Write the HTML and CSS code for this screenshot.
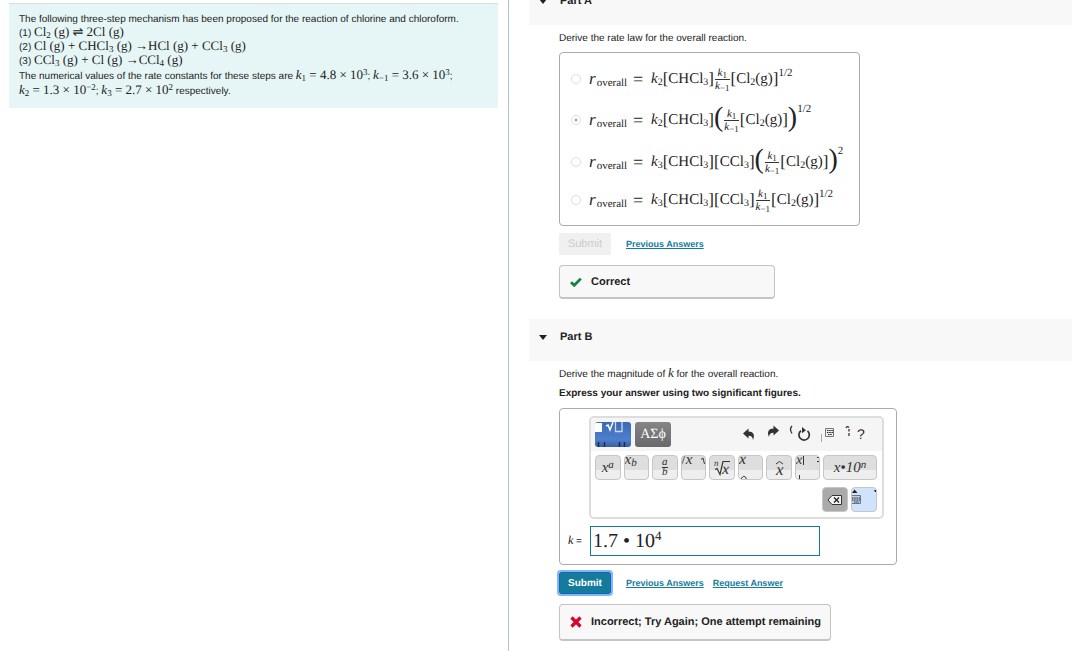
FILE: index.html
```html
<!DOCTYPE html>
<html lang="en">
<head>
<meta charset="utf-8">
<title>Rate law problem</title>
<link rel="stylesheet" href="styles.css">
</head>
<body>
<div class="page">
  <aside class="intro-pane">
    <div class="intro">
      <p>The following three-step mechanism has been proposed for the reaction of chlorine and chloroform.</p>
      <p>(1) <span class="m">Cl<sub>2</sub> (g) ⇌ 2Cl (g)</span></p>
      <p>(2) <span class="m">Cl (g) + CHCl<sub>3</sub> (g) →HCl (g) + CCl<sub>3</sub> (g)</span></p>
      <p>(3) <span class="m">CCl<sub>3</sub> (g) + Cl (g) →CCl<sub>4</sub> (g)</span></p>
      <p class="tall">The numerical values of the rate constants for these steps are <span class="m"><i>k</i><sub>1</sub> = 4.8 × 10<sup>3</sup></span>; <span class="m"><i>k</i><sub>−1</sub> = 3.6 × 10<sup>3</sup></span>;</p>
      <p class="tall"><span class="m"><i>k</i><sub>2</sub> = 1.3 × 10<sup>−2</sup></span>; <span class="m"><i>k</i><sub>3</sub> = 2.7 × 10<sup>2</sup></span> respectively.</p>
    </div>
  </aside>

  <main class="parts">
    <section class="part part-a">
      <h2 class="part-head"><span class="caret"></span>Part A</h2>
      <div class="part-body">
        <p class="prompt">Derive the rate law for the overall reaction.</p>
        <div class="box choices">
          <label class="choice"><input type="radio" name="law" disabled>
            <span class="eq"><span class="lhs"><i>r</i><sub>overall</sub></span><span class="is">=</span><i>k</i><sub>2</sub><b class="br">[</b>CHCl<sub>3</sub><b class="br">]</b><span class="frac"><span><i>k</i><sub>1</sub></span><span><i>k</i><sub>−1</sub></span></span><b class="br">[</b>Cl<sub>2</sub>(g)<b class="br">]</b><sup>1/2</sup></span></label>
          <label class="choice"><input type="radio" name="law" disabled checked>
            <span class="eq"><span class="lhs"><i>r</i><sub>overall</sub></span><span class="is">=</span><i>k</i><sub>2</sub><b class="br">[</b>CHCl<sub>3</sub><b class="br">]</b><span class="big">(</span><span class="frac"><span><i>k</i><sub>1</sub></span><span><i>k</i><sub>−1</sub></span></span><b class="br">[</b>Cl<sub>2</sub>(g)<b class="br">]</b><span class="big">)</span><sup class="high">1/2</sup></span></label>
          <label class="choice"><input type="radio" name="law" disabled>
            <span class="eq"><span class="lhs"><i>r</i><sub>overall</sub></span><span class="is">=</span><i>k</i><sub>3</sub><b class="br">[</b>CHCl<sub>3</sub><b class="br">]</b><b class="br">[</b>CCl<sub>3</sub><b class="br">]</b><span class="big">(</span><span class="frac"><span><i>k</i><sub>1</sub></span><span><i>k</i><sub>−1</sub></span></span><b class="br">[</b>Cl<sub>2</sub>(g)<b class="br">]</b><span class="big">)</span><sup class="high">2</sup></span></label>
          <label class="choice"><input type="radio" name="law" disabled>
            <span class="eq"><span class="lhs"><i>r</i><sub>overall</sub></span><span class="is">=</span><i>k</i><sub>3</sub><b class="br">[</b>CHCl<sub>3</sub><b class="br">]</b><b class="br">[</b>CCl<sub>3</sub><b class="br">]</b><span class="frac"><span><i>k</i><sub>1</sub></span><span><i>k</i><sub>−1</sub></span></span><b class="br">[</b>Cl<sub>2</sub>(g)<b class="br">]</b><sup>1/2</sup></span></label>
        </div>
        <div class="actions">
          <button class="submit" type="button" disabled>Submit</button>
          <a href="#">Previous Answers</a>
        </div>
        <div class="feedback right">
          <svg width="12" height="10" viewBox="0 0 12 10"><path d="M1 5.2 4.3 8.3 10.8 1.6" fill="none" stroke="#138440" stroke-width="2.8"/></svg>
          Correct
        </div>
      </div>
    </section>

    <section class="part">
      <h2 class="part-head"><span class="caret"></span>Part B</h2>
      <div class="part-body">
        <p class="prompt">Derive the magnitude of <span class="m"><i>k</i></span> for the overall reaction.</p>
        <p class="prompt strong">Express your answer using two significant figures.</p>
        <div class="box entry">
          <div class="tools">
            <div class="tools-top">
              <button class="tab blue" type="button" aria-label="Templates">
                <svg width="36" height="25" viewBox="0 0 36 25"><path d="M0 1h7v9H0z" fill="#fff"/><path d="M11 4l2-1 2 5L18 0" fill="none" stroke="#fff" stroke-width="1.500"/><path d="M20.500 0v9.500h6.500V0" fill="none" stroke="#c9daf4" stroke-width="1.300"/><path d="M3.500 20v5M9.500 20v5M24.500 20v5M29.500 20v5" stroke="#152c57" stroke-width="1.500"/></svg></button>
              <button class="tab gray" type="button">ΑΣϕ</button>
              <span class="spacer"></span>
              <button class="icon" type="button" aria-label="Undo"><svg width="14" height="16" viewBox="0 0 14 16"><path d="M1 7.500 6.500 2.500V5.500c4.500 0 7 3 4.500 8.500-.2-2.800-1.500-4.300-4.500-4.300V12.500z" fill="#333"/></svg></button>
              <button class="icon up" type="button" aria-label="Redo"><svg width="14" height="16" viewBox="0 0 14 16"><path d="M13 7.500 7.500 2.500V5.500C3 5.500.5 8.500 3 14c.2-2.800 1.500-4.300 4.500-4.300V12.500z" fill="#333"/></svg></button>
              <button class="icon wide" type="button" aria-label="Reset"><svg width="28" height="20" viewBox="0 0 28 20"><path d="M6 2Q3 5 6 9.500" fill="none" stroke="#333" stroke-width="1.300"/><path d="M15 6.700a5.200 5.200 0 1 0 6.500 .2" fill="none" stroke="#333" stroke-width="1.700"/><path d="M16 3 20 6.200l-4 3z" fill="#333"/></svg></button>
              <button class="icon" type="button" aria-label="Keyboard"><svg width="15" height="18" viewBox="0 0 15 18"><path d="M1.500 9v8" stroke="#aaa"/><path d="M5.500 3.500h8v8h-8z" fill="#eee" stroke="#777"/><path d="M7 5.500h6M7 7.500h6M8 9.500h4" stroke="#222" stroke-dasharray="1.500 .7"/></svg></button>
              <button class="icon help" type="button" aria-label="Help"><svg width="6" height="12" viewBox="0 0 6 12"><path d="M1 3Q2 .5 4 2.500M4 4v2.500M4 8v3" fill="none" stroke="#333" stroke-width="1.300"/></svg><span>?</span></button>
            </div>
            <div class="keys">
              <button type="button"><span><i>x</i><sup>a</sup></span></button>
              <button class="top" type="button"><span><i>x</i><sub>b</sub></span></button>
              <button type="button"><span class="frac"><span><i>a</i></span><span><i>b</i></span></span></button>
              <button class="top split" type="button"><span>/<i>x</i></span><svg width="4" height="9" viewBox="0 0 4 9"><path d="M0 3.500 2 2l1.500 6" fill="none" stroke="#333"/></svg></button>
              <button type="button" aria-label="nth root"><svg width="20" height="18" viewBox="0 0 20 18"><path d="M3 10.500 5 9.500l3 6L11 2.500H18" fill="none" stroke="#333" stroke-width="1.200"/><text x="2" y="7" font-size="9">n</text><text x="10" y="15" font-size="16">x</text></svg></button>
              <button class="top" type="button" aria-label="Stacked"><svg width="24" height="23" viewBox="0 0 24 23"><text x="0" y="8" font-size="16">x</text><path d="M2 23q3-5 5-1v2" fill="none" stroke="#333"/></svg></button>
              <button type="button" aria-label="x hat"><svg width="16" height="20" viewBox="0 0 16 20"><path d="M5 6 8.500 3.500 12 6" fill="none" stroke="#333"/><text x="5" y="17" font-size="17">x</text></svg></button>
              <button class="top" type="button" aria-label="Evaluate"><svg width="24" height="23" viewBox="0 0 24 23"><text x="0" y="8" font-size="14">x</text><path d="M7.500 0v9M3.500 19v4M21 1.500h2M21 5.500h2" fill="none" stroke="#333"/></svg></button>
              <button type="button"><span><i>x</i>•<i>10</i><sup>n</sup></span></button>
            </div>
            <div class="keys-end">
              <button class="erase" type="button" aria-label="Backspace"><svg width="16" height="12" viewBox="0 0 16 12"><path d="M1 6 5 1.500h9.500v9H5z" fill="#f3f3f3" stroke="#333"/><path d="m7 3.500 5 5m0-5-5 5" stroke="#222" stroke-width="1.300"/></svg></button>
              <button class="pad" type="button" aria-label="Show keyboard"><svg width="24" height="23" viewBox="0 0 24 23"><path d="M0 5 2.500 1.500 5.500 5zM22 2h2v2h-1z" fill="#222"/><path d="M0 7.500h8.500v8H0" fill="#c2d3e6" stroke="#66788c"/><path d="M0 10h8M0 12h8M2 14h5" stroke="#222" stroke-dasharray="1.500 .7"/></svg></button>
            </div>
          </div>
          <div class="answer">
            <span class="answer-name" id="k-name"><i>k</i> =</span>
            <div class="field" role="textbox" contenteditable="true" aria-labelledby="k-name">1.7 • 10<sup>4</sup></div>
          </div>
        </div>
        <div class="actions">
          <button class="submit active" type="button">Submit</button>
          <a href="#">Previous Answers</a>
          <a href="#">Request Answer</a>
        </div>
        <div class="feedback wrong">
          <svg width="12" height="12" viewBox="0 0 12 12"><path d="m1.500 1.500 9 9m0-9-9 9" stroke="#d9042b" stroke-width="3.200"/></svg>
          Incorrect; Try Again; One attempt remaining
        </div>
      </div>
    </section>
  </main>
</div>
</body>
</html>
```
FILE: styles.css
```css
* { box-sizing: border-box; }
body {
  margin: 0;
  background: #fff;
  color: #222;
  font: 10px/14px "Liberation Sans", Arial, sans-serif;
  text-rendering: geometricPrecision;
}
p, h2 { margin: 0; }
button { padding: 0; font-family: inherit; color: inherit; text-rendering: inherit; }
sub, sup { font-size: 9px; line-height: 0; }
sub { vertical-align: -2px; }
sup { vertical-align: 4px; }

.page {
  display: grid;
  grid-template-columns: 509fr 563fr;
  height: 100vh;
  overflow: hidden;
}

/* Introduction */
.intro-pane {
  padding: 3px 10px 0 9px;
  border-right: 1px solid #aec3da;
}
.intro {
  padding: 9px 10px;
  border-top: 1px solid #d5dfdf;
  background: #e6f6f6;
}
.intro .tall { line-height: 15px; }
.m {
  font-family: "Liberation Serif", "Times New Roman", "DejaVu Sans", serif;
  font-size: 13px;
  line-height: 0;
}

/* Parts */
.parts { padding-left: 20px; min-width: 0; }
.part-a { margin-top: -17px; }
.part-head {
  display: flex;
  align-items: center;
  gap: 13px;
  height: 42px;
  padding: 0 10px 6px;
  background: #f8f8f8;
  font-size: 11px;
}
.caret {
  width: 8px;
  border: 4px solid transparent;
  border-top: 5px solid #222;
  border-bottom: 0;
}
.part-body { padding: 7px 0 20px 30px; }
.prompt { line-height: 13px; }
.strong { margin-top: 6px; font-weight: bold; }
.box {
  margin-top: 8px;
  border: 1px solid #aaa;
  border-radius: 4px;
}

.choices {
  display: grid;
  grid-template-rows: 40px 42px 42px 34px;
  width: 301px;
  margin-top: 7px;
  padding: 6px 11px 8px;
}
.choice { display: flex; align-items: center; gap: 8px; }
.choice input {
  appearance: none;
  width: 10px;
  height: 10px;
  margin: 0;
  border: 1px solid #ddd;
  border-radius: 50%;
}
.choice input:checked { background: radial-gradient(#aaa 1px, #fff 2px); }
.eq {
  display: flex;
  align-items: center;
  font: 15px/18px "Liberation Serif", "Times New Roman", serif;
}
.eq sub { align-self: center; padding-top: 8px; font-size: 10px; }
.eq sup { align-self: center; padding-bottom: 12px; font-size: 11px; }
.eq .high { padding-bottom: 22px; }
.lhs { width: 44px; }
.lhs i { padding-right: 1px; font-size: 17px; }
.lhs sub { font-size: 11px; }
.is { width: 18px; font-size: 18px; }
.br { font-size: 17px; font-weight: normal; }
.big { font-size: 28px; line-height: 32px; padding-bottom: 4px; }
.frac {
  display: inline-flex;
  flex-direction: column;
  align-items: center;
  margin: 0 1px;
  font-size: 11px;
  line-height: 12px;
}
.frac sub { font-size: 9px; }
.frac > span:first-child { border-bottom: 1px solid #333; align-self: stretch; text-align: center; }

.actions { display: flex; align-items: center; height: 22px; margin: 7px 0 10px; }
.submit {
  width: 52px;
  height: 22px;
  margin-right: 15px;
  border: 0;
  border-radius: 2px;
  background: #f0f0f0;
  color: #ccc;
  font-size: 11px;
}
.submit.active {
  background: #147b9c;
  color: #fff;
  font-size: 10px;
  font-weight: bold;
  outline: 2px solid #83b4fa;
  border: 1px solid #1267b3;
}
.actions a { margin-right: 9px; color: #147b9c; font-size: 9px; font-weight: bold; }
.feedback {
  display: flex;
  align-items: center;
  gap: 9px;
  width: max-content;
  padding: 0 9px 0 10px;
  border: 1px solid #c4c4c4;
  border-bottom-width: 2px;
  border-radius: 4px;
  background: #f8f8f8;
  font-size: 11px;
  font-weight: bold;
}
.right { min-width: 216px; height: 34px; }
.wrong { height: 37px; }

/* Equation editor */
.entry { width: 338px; padding: 7px 12px 8px 8px; }
.tools {
  margin-left: 21px;
  border: 2px solid #ddd;
  border-radius: 5px;
  overflow: hidden;
}
.tools-top {
  display: flex;
  align-items: flex-start;
  height: 33px;
  padding: 4px 15px 0 4px;
  background: #f5f5f5;
}
.tab {
  width: 36px;
  height: 25px;
  margin-right: 4px;
  border: 0;
  border-radius: 3px;
  overflow: hidden;
  color: #fff;
  font: 14px/25px "Liberation Serif", serif;
}
.blue { background: linear-gradient(#3c69b2, #4d7fcf 70%, #3a5f9d); }
.gray { background: linear-gradient(#858587, #69696b); }
.spacer { flex: 1; }
.icon {
  display: flex;
  align-items: center;
  justify-content: center;
  width: 24px;
  height: 24px;
  border: 0;
  background: none;
}
.icon.up { padding-bottom: 6px; }
.icon.wide { width: 30px; }
.icon.help { font-size: 14px; gap: 6px; margin-left: 4px; }
.help svg { margin-bottom: 6px; }
.keys {
  display: grid;
  grid-template-columns: repeat(8, 1fr) 54px;
  gap: 3px;
  padding: 4px 5px 0 4px;
}
.keys button, .keys-end button {
  display: flex;
  align-items: center;
  justify-content: center;
  height: 25px;
  border: 1px solid #c6c6c6;
  border-radius: 4px;
  overflow: hidden;
  background: linear-gradient(#dedede 60%, #eee 60%);
  color: #333;
  font: 15px/16px "Liberation Serif", serif;
}
.keys sup, .keys sub { font-size: 11px; font-style: italic; }
.keys .top { align-items: flex-start; justify-content: flex-start; line-height: 9px; }
.keys .split { justify-content: space-between; }
.keys text { font-family: "Liberation Serif", serif; font-style: italic; fill: #333; }
.keys .frac { line-height: 9px; }
.keys svg, .keys-end svg { flex: none; }
.keys-end { display: flex; justify-content: flex-end; gap: 3px; padding: 7px 5px 5px 4px; }
.keys-end button { width: 26px; }
.keys-end .erase { background: #aaa; }
.keys-end .pad { align-items: flex-start; justify-content: flex-start; background: #cfe4fc; }
.answer { display: flex; align-items: center; gap: 7px; margin-top: 7px; }
.answer-name { width: 15px; white-space: nowrap; }
.answer-name i { font: italic 12px "Liberation Serif", serif; }
.field {
  width: 230px;
  height: 30px;
  padding: 0 2px;
  border: 1px solid #147b9c;
  font: 20px/28px "Liberation Serif", serif;
}
.field sup { font-size: 13px; vertical-align: 7px; }
```
